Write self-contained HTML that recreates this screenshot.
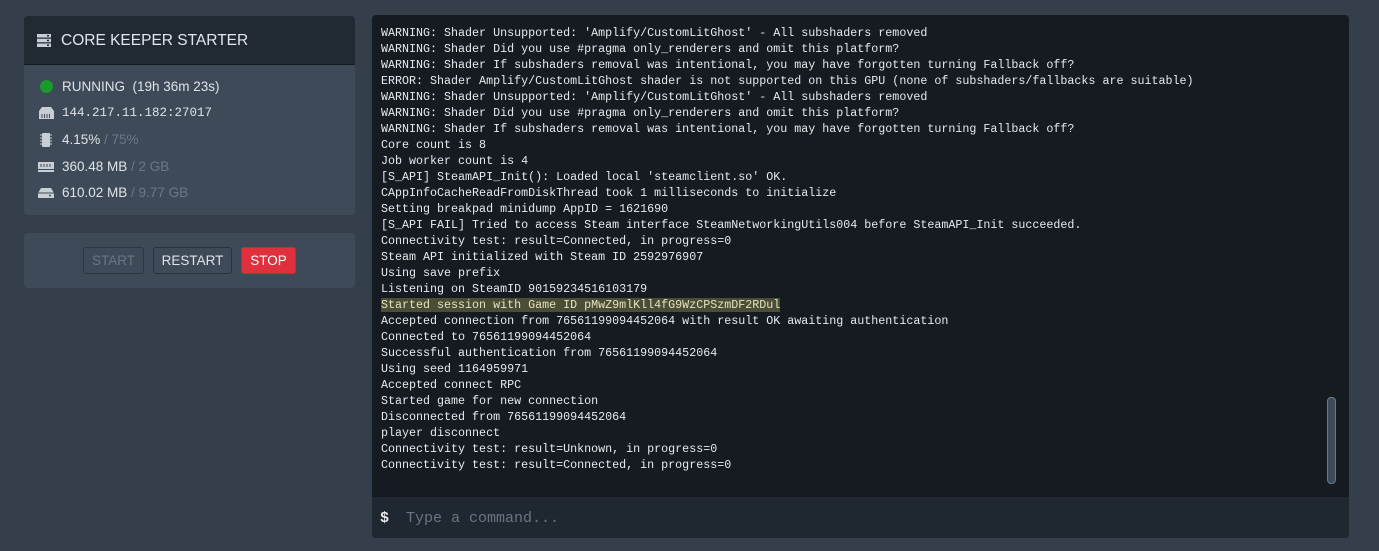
<!DOCTYPE html>
<html><head><style>
body{margin:0;width:1379px;height:551px;background:#343f4b;font-family:"Liberation Sans",sans-serif;position:relative;overflow:hidden}
.p1{position:absolute;left:24px;top:16px;width:331px;height:199px;background:#3e4a58;border-radius:4px;overflow:hidden}
.hd{height:49px;background:#212932;border-bottom:1px solid #141a20;color:#e3e6ea;font-size:15.5px;display:flex;align-items:center;padding-top:1px;box-sizing:border-box}
.row{position:absolute;left:14px;display:flex;align-items:center;color:#dfe3e8;font-size:13.5px}
.row .ic{width:16px;margin-right:8px;display:flex;justify-content:center}
.dim{color:#6d7886}
.p2{position:absolute;left:24px;top:233px;width:331px;height:55px;background:#3e4a58;border-radius:4px}
.btn{position:absolute;top:14px;height:27px;border:1px solid #2e3843;border-radius:3px;font-size:13.5px;display:flex;align-items:center;justify-content:center;box-sizing:border-box}
.con{position:absolute;left:372px;top:15px;width:977px;height:523px;background:#151b21;border-radius:4px;overflow:hidden}
pre{margin:0;position:absolute;left:9px;top:10px;font-family:"Liberation Mono",monospace;font-size:11.68px;line-height:16px;color:#e8eaec}
.hl{background:#4b4e36;color:#e4e2c2}
.inp{position:absolute;left:0;bottom:0;width:100%;height:41px;background:#1f2830;font-family:"Liberation Mono",monospace;font-size:15px;display:flex;align-items:center;padding-top:2px;box-sizing:border-box}
.sb{position:absolute;left:955px;top:382px;width:7px;height:85px;border:1px solid #6b7784;background:#3e4a58;border-radius:4px}
</style></head><body>
<div class="p1">
 <div class="hd"><svg width="14" height="13" style="margin:0 10px 0 13px" viewBox="0 0 14 13"><rect y="0" width="14" height="3.5" fill="#c8ced5"/><rect y="4.75" width="14" height="3.5" fill="#c8ced5"/><rect y="9.5" width="14" height="3.5" fill="#c8ced5"/><rect x="10" y="1" width="2" height="1.5" fill="#212932"/><rect x="10" y="5.75" width="2" height="1.5" fill="#212932"/><rect x="10" y="10.5" width="2" height="1.5" fill="#212932"/></svg>CORE KEEPER STARTER</div>
 <div class="row" style="top:63px"><span class="ic"><span style="width:13px;height:13px;border-radius:50%;background:#1a9a2a;display:block"></span></span>RUNNING&nbsp;&nbsp;(19h 36m 23s)</div>
 <div class="row" style="top:90px;font-family:'Liberation Mono',monospace;font-size:12.5px"><span class="ic"><svg width="15" height="12"><path d="M3 0h9l3 4v8H0V4z" fill="#c8ced5"/><path d="M3 7v4M5.5 7v4M8 7v4M10.5 7v4" stroke="#3e4a58"/></svg></span>144.217.11.182:27017</div>
 <div class="row" style="top:116px"><span class="ic"><svg width="12" height="14"><rect x="2" y="0" width="8" height="14" rx="1" fill="#c8ced5"/><path d="M0 2h2M0 5h2M0 8h2M0 11h2M10 2h2M10 5h2M10 8h2M10 11h2" stroke="#c8ced5"/></svg></span>4.15%&nbsp;<span class="dim">/ 75%</span></div>
 <div class="row" style="top:143px"><span class="ic"><svg width="16" height="10"><rect width="16" height="7" fill="#c8ced5"/><rect x="0" y="8" width="16" height="2" fill="#c8ced5"/><path d="M3 2v3M6 2v3M9 2v3M12 2v3" stroke="#3e4a58"/></svg></span>360.48 MB&nbsp;<span class="dim">/ 2 GB</span></div>
 <div class="row" style="top:169px"><span class="ic"><svg width="16" height="10"><path d="M3 0h10l3 5v5H0V5z" fill="#c8ced5"/><path d="M0 5h16" stroke="#3e4a58"/><circle cx="12" cy="7.5" r="1" fill="#3e4a58"/></svg></span>610.02 MB&nbsp;<span class="dim">/ 9.77 GB</span></div>
</div>
<div class="p2">
 <div class="btn" style="left:59px;width:61px;color:#6a7583">START</div>
 <div class="btn" style="left:129px;width:79px;color:#dfe3e8;border-color:#2a333d">RESTART</div>
 <div class="btn" style="left:217px;width:55px;background:#e0303d;border-color:#c82a35;color:#fff">STOP</div>
</div>
<div class="con">
<pre>WARNING: Shader Unsupported: 'Amplify/CustomLitGhost' - All subshaders removed
WARNING: Shader Did you use #pragma only_renderers and omit this platform?
WARNING: Shader If subshaders removal was intentional, you may have forgotten turning Fallback off?
ERROR: Shader Amplify/CustomLitGhost shader is not supported on this GPU (none of subshaders/fallbacks are suitable)
WARNING: Shader Unsupported: 'Amplify/CustomLitGhost' - All subshaders removed
WARNING: Shader Did you use #pragma only_renderers and omit this platform?
WARNING: Shader If subshaders removal was intentional, you may have forgotten turning Fallback off?
Core count is 8
Job worker count is 4
[S_API] SteamAPI_Init(): Loaded local 'steamclient.so' OK.
CAppInfoCacheReadFromDiskThread took 1 milliseconds to initialize
Setting breakpad minidump AppID = 1621690
[S_API FAIL] Tried to access Steam interface SteamNetworkingUtils004 before SteamAPI_Init succeeded.
Connectivity test: result=Connected, in progress=0
Steam API initialized with Steam ID 2592976907
Using save prefix
Listening on SteamID 90159234516103179
<span class="hl">Started session with Game ID pMwZ9mlKll4fG9WzCPSzmDF2RDul</span>
Accepted connection from 76561199094452064 with result OK awaiting authentication
Connected to 76561199094452064
Successful authentication from 76561199094452064
Using seed 1164959971
Accepted connect RPC
Started game for new connection
Disconnected from 76561199094452064
player disconnect
Connectivity test: result=Unknown, in progress=0
Connectivity test: result=Connected, in progress=0</pre>
<div class="sb"></div>
<div class="inp"><span style="color:#e8eaec;font-weight:bold;margin-left:8px">$</span><span style="color:#6b7581;margin-left:17px">Type a command...</span></div>
</div>
</body></html>
